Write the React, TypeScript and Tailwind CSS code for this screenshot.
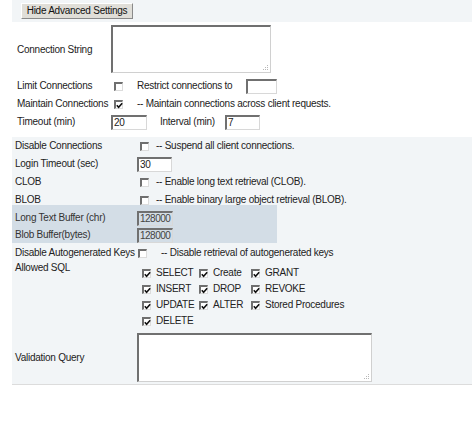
import React from "react";

function Box({ checked, className = "" }: { checked?: boolean; className?: string }) {
  return (
    <span
      className={`relative inline-block w-[9px] h-[9px] shrink-0 bg-white border-t-2 border-l-2 border-b border-r border-t-[#6f6f6f] border-l-[#6f6f6f] border-b-[#dcdcdc] border-r-[#dcdcdc] ${className}`}
    >
      {checked && (
        <svg className="absolute left-0 top-0" width="7" height="7" viewBox="0 0 7 7">
          <path d="M0.8 3.2 L2.6 5.2 L6.2 1.2" fill="none" stroke="#111" strokeWidth="1.6" />
        </svg>
      )}
    </span>
  );
}

function Field({ value, className = "" }: { value: string; className?: string }) {
  return (
    <input
      readOnly
      value={value}
      className={`h-[15px] leading-none border-t-2 border-l-2 border-b border-r border-t-[#707070] border-l-[#707070] border-b-[#d8d8d8] border-r-[#d8d8d8] outline-none ${className}`}
    />
  );
}

function Area({ className = "" }: { className?: string }) {
  return (
    <div
      className={`relative bg-white border-t-2 border-l-2 border-b border-r border-t-[#707070] border-l-[#707070] border-b-[#d0d0d0] border-r-[#d0d0d0] ${className}`}
    >
      <svg className="absolute right-[1px] bottom-[1px]" width="7" height="7" viewBox="0 0 7 7">
        <rect x="5" y="1" width="1" height="1" fill="#b8b8b8" />
        <rect x="3" y="3" width="1" height="1" fill="#b8b8b8" />
        <rect x="5" y="3" width="1" height="1" fill="#b8b8b8" />
        <rect x="1" y="5" width="1" height="1" fill="#b8b8b8" />
        <rect x="3" y="5" width="1" height="1" fill="#b8b8b8" />
        <rect x="5" y="5" width="1" height="1" fill="#b8b8b8" />
      </svg>
    </div>
  );
}

function Row({ children, className = "" }: { children: React.ReactNode; className?: string }) {
  return <div className={`flex items-center h-[18px] ${className}`}>{children}</div>;
}

const sql = [
  ["SELECT", "Create", "GRANT"],
  ["INSERT", "DROP", "REVOKE"],
  ["UPDATE", "ALTER", "Stored Procedures"],
  ["DELETE"],
];

export default function App() {
  return (
    <div className="w-[474px] h-[439px] bg-white text-[10px] tracking-[-0.25px] leading-none whitespace-nowrap text-[#222] font-['Liberation_Sans',Arial,sans-serif]">
      <div className="ml-3 w-[460px]">
        {/* advanced settings toggle */}
        <div className="h-[22px] bg-[#f2f5f7] pt-[3px] pl-[9px]">
          <button className="h-[16px] w-[112px] bg-[#e0ded8] text-[#111] border border-t-white border-l-white border-b-[#8a8a8a] border-r-[#8a8a8a] leading-none">
            Hide Advanced Settings
          </button>
        </div>

        {/* connection settings */}
        <div className="h-[115px] pl-[5px] pt-[3px]">
          <div className="flex items-center h-[48px]">
            <span className="w-[94px] pt-[2px]">Connection String</span>
            <Area className="w-[160px] h-[48px]" />
          </div>
          <Row className="mt-[4px]">
            <span className="w-[94px]">Limit Connections</span>
            <Box className="ml-[3px]" />
            <span className="ml-[14px] w-[109px]">Restrict connections to</span>
            <Field value="" className="w-[31px] px-[1px] bg-white" />
          </Row>
          <Row>
            <span className="w-[94px]">Maintain Connections</span>
            <Box checked className="ml-[3px]" />
            <span className="ml-[14px]">-- Maintain connections across client requests.</span>
          </Row>
          <Row>
            <span className="w-[94px]">Timeout (min)</span>
            <Field value="20" className="w-[36px] px-[1px] bg-white" />
            <span className="ml-[13px] w-[65px]">Interval (min)</span>
            <Field value="7" className="w-[35px] px-[1px] bg-white" />
          </Row>
        </div>

        {/* advanced */}
        <div className="bg-[#f2f5f7] border-b border-[#dcdcdc] pl-[3px] pb-[2px]">
          <Row>
            <span className="w-[122px]">Disable Connections</span>
            <Box className="ml-[3px]" />
            <span className="ml-[7px]">-- Suspend all client connections.</span>
          </Row>
          <Row>
            <span className="w-[122px]">Login Timeout (sec)</span>
            <Field value="30" className="w-[35px] px-[1px] bg-white" />
          </Row>
          <Row>
            <span className="w-[122px]">CLOB</span>
            <Box className="ml-[3px]" />
            <span className="ml-[7px]">-- Enable long text retrieval (CLOB).</span>
          </Row>
          <Row>
            <span className="w-[122px]">BLOB</span>
            <Box className="ml-[3px]" />
            <span className="ml-[7px]">-- Enable binary large object retrieval (BLOB).</span>
          </Row>
          <div className="-mt-[4px] pt-[4px] -ml-[3px] pl-[3px] w-[265px] bg-[#d3dde6] text-[#333]">
            <Row>
              <span className="w-[122px]">Long Text Buffer (chr)</span>
              <Field value="128000" className="w-[36px] pl-[1px] tracking-[-0.5px] bg-[#d3dde6] text-[#444]" />
            </Row>
            <Row className="!h-[16px]">
              <span className="w-[122px]">Blob Buffer(bytes)</span>
              <Field value="128000" className="w-[36px] pl-[1px] tracking-[-0.5px] bg-[#d3dde6] text-[#444]" />
            </Row>
          </div>
          <div className="flex items-center h-[20px]">
            <div className="flex items-center w-[146px]">
              <span>Disable Autogenerated Keys</span>
              <Box className="ml-[3px]" />
            </div>
            <span>-- Disable retrieval of autogenerated keys</span>
          </div>
          <div className="flex">
            <span className="w-[127px]">Allowed SQL</span>
            <div className="pt-[2px] grid grid-cols-[57px_52px_auto]">
              {sql.flat().map((s) => (
                <div key={s} className="flex items-center h-[16px]">
                  <Box checked />
                  <span className="ml-[5px]">{s}</span>
                </div>
              ))}
            </div>
          </div>
          <div className="flex items-center mt-[4px]">
            <span className="w-[122px]">Validation Query</span>
            <Area className="w-[235px] h-[49px]" />
          </div>
        </div>
      </div>
    </div>
  );
}
